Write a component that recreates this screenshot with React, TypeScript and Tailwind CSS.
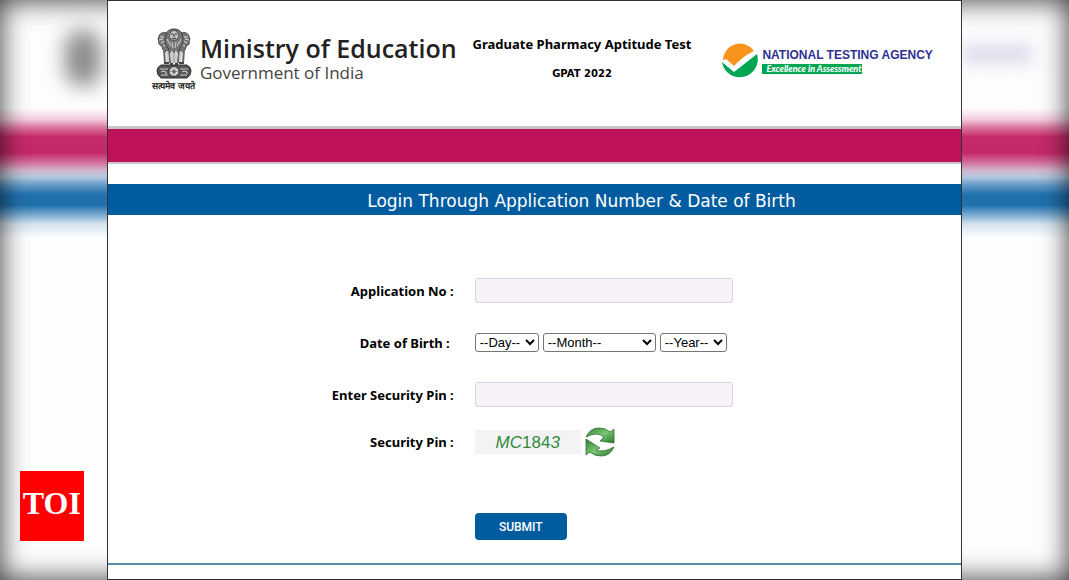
import { useState } from 'react'

const days = Array.from({ length: 31 }, (_, i) => String(i + 1))
const months = [
  'January', 'February', 'March', 'April', 'May', 'June',
  'July', 'August', 'September', 'October', 'November', 'December',
]
const years = Array.from({ length: 50 }, (_, i) => String(2005 - i))

function Emblem() {
  return (
    <svg viewBox="0 0 36 52" className="h-[52px] w-9" aria-hidden="true">
      {/* side lions */}
      <path d="M3 9c0-4 4-5 8-4l2 3v14l-4 2c-2-2-3-4-3-6-3-1-4-3-3-5-1-1-1-3 0-4z" fill="#777" stroke="#3c3c3c" />
      <path d="M33 9c0-4-4-5-8-4l-2 3v14l4 2c2-2 3-4 3-6 3-1 4-3 3-5 1-1 1-3 0-4z" fill="#777" stroke="#3c3c3c" />
      <path d="M4 9h4M3 12l4-1M5 15l4-2M7 18l4-2M32 9h-4M33 12l-4-1M31 15l-4-2M29 18l-4-2" stroke="#ddd" fill="none" />
      {/* front lion */}
      <path d="M10 8c0-5 4-7 8-7s8 2 8 7c2 4 1 9-2 12l-2 4h-8l-2-4c-3-3-4-8-2-12z" fill="#777" stroke="#3a3a3a" />
      <ellipse cx="18" cy="7.500" rx="4.500" ry="5" fill="#c5c5c5" stroke="#555" />
      <path d="M15 6h2M19 6h2M18 6v3M16 10q2 2 4 0" stroke="#222" fill="none" />
      <path d="M11 11l2 4M13 14l2 4M16 14l1 6M20 14l-1 6M23 14l-2 4M25 11l-2 4" stroke="#ccc" fill="none" />
      {/* legs */}
      <path d="M8 22l1 13M13 22l1 13M23 22l-1 13M28 22l-1 13" stroke="#666" strokeWidth="2" />
      <path d="M11 23l1 12M16 23v12M20 23v12M25 23l-1 12" stroke="#ccc" strokeWidth="2" />
      <path d="M18 22v13" stroke="#666" />
      <path d="M8 35h5M14 36h3M19 36h3M23 35h5" stroke="#444" strokeWidth="2" />
      {/* abacus with the wheel */}
      <path d="M5 37h26q4 2 4 6t-4 7H5q-4-3-4-7t4-6z" fill="#555" stroke="#333" />
      <path d="M4 41h8M24 41h8M5 47h7M24 47h7" stroke="#ccc" />
      <path d="M5 44l2-1 3 1v2M26 44l2-1 3 1v2" stroke="#ddd" fill="none" />
      <circle cx="18" cy="43.500" r="5" fill="#ddd" stroke="#333" />
      <circle cx="18" cy="43.500" r="1.500" fill="#444" />
      <path d="M18 39v9M13.500 43.500h9M15 40.500l6 6M21 40.500l-6 6" stroke="#666" strokeWidth=".6" />
    </svg>
  )
}

function AgencyMark() {
  return (
    <svg viewBox="0 0 36 36" className="size-9 shrink-0" aria-hidden="true">
      <path d="M1 17A17 17 0 0 1 32 8L12 24 5 17z" fill="#f7941d" />
      <path d="M0 19l12 10L35 11A18 18 0 1 1 0 19z" fill="#00a651" />
      <path d="M0 18l4-2 8 7Q21 13 32 8l3 2Q22 17 12 28z" fill="#fff" />
    </svg>
  )
}

function RefreshIcon() {
  return (
    <svg viewBox="0 0 30 30" className="size-[30px]" aria-hidden="true">
      <defs>
        <linearGradient id="leaf" x1="0" y1="0" x2="1" y2="1">
          <stop offset="0" stopColor="#2f7d32" />
          <stop offset=".5" stopColor="#7cc576" />
          <stop offset="1" stopColor="#2a7a2c" />
        </linearGradient>
      </defs>
      <path d="M1 10Q5 1 14 1q7 0 11 4l4-3v14l-14-2 4-4Q12 4 1 10z" fill="url(#leaf)" stroke="#2b6e2d" strokeWidth=".8" />
      <path d="M29 20Q25 29 16 29q-7 0-11-4l-4 3V12l14 9-4 2Q18 26 29 20z" fill="url(#leaf)" stroke="#2b6e2d" strokeWidth=".8" />
    </svg>
  )
}

const labelClass = 'pr-[21px] text-right font-["Noto_Sans",sans-serif] text-[13px] leading-4 font-bold text-black'
const inputClass = 'h-[25px] w-[258px] rounded-[3px] border border-[#d8d2dc] bg-[#f7f2f9] px-2 text-[13px]'
const selectClass =
  'h-[19px] rounded-[3px] border border-[#767676] bg-white font-["Liberation_Sans",Arial,sans-serif] text-[13px] leading-4 text-black'

export default function App() {
  const [pin, setPin] = useState('')

  return (
    <div className="flex min-h-screen bg-[linear-gradient(#fdfdfe_0px,#fdfdfe_108px,#f3cfdf_119px,#dc7ba4_127px,#c52a6b_137px,#c3286a_153px,#d273a0_163px,#d3b3cc_170px,#b3c8de_177px,#5c96c4_186px,#2070ad_195px,#2070ad_205px,#71a5cd_214px,#d3e3ef_224px,#fdfdfe_238px)] font-['DejaVu_Sans',Verdana,sans-serif] shadow-[inset_0_0_28px_rgba(0,0,0,0.8)]">
      <aside className="flex w-[10%] shrink-0 flex-col items-end justify-between overflow-hidden">
        <div className="mt-[30px] mr-1.5 h-14 w-9 rounded-2xl bg-[#8c8c8c] blur-[10px]" />
        <div className="mr-[23px] mb-[39px] flex h-[70px] w-16 items-center justify-center bg-[#fe0000] pb-1.5 font-['Liberation_Serif','Times_New_Roman',serif] text-[32px] font-bold text-white">
          TOI
        </div>
      </aside>

      <main className="flex flex-1 flex-col border border-[#333] bg-white">
        <header className="flex h-[125px] items-start pl-11">
          <div className="flex shrink-0 items-start">
            <div className="flex w-11 flex-col items-center pt-[27px]">
              <Emblem />
              <span lang="hi" className="text-[9px] leading-3 font-bold whitespace-nowrap text-[#222]">
                सत्यमेव जयते
              </span>
            </div>
            <div className="pt-[31px] pl-1 font-['Open_Sans',sans-serif] whitespace-nowrap">
              <div className="text-[25px] leading-8 font-semibold text-[#222]">Ministry of Education</div>
              <div className="text-[17px] leading-[18px] text-[#444]">Government of India</div>
            </div>
          </div>
          <div className="ml-4 shrink-0 pt-[35px] text-center font-bold whitespace-nowrap text-black">
            <h1 className="font-['Noto_Sans',sans-serif] text-[13px] leading-4">Graduate Pharmacy Aptitude Test</h1>
            <p className="mt-3.5 text-[10px] leading-4">GPAT 2022</p>
          </div>
          <div className="mt-[42px] ml-[31px] flex gap-1">
            <AgencyMark />
            <div className="pt-1 font-['Liberation_Sans',Arial,sans-serif] font-bold whitespace-nowrap">
              <div className="text-[12px] leading-[17px] text-[#2e3192]">NATIONAL TESTING AGENCY</div>
              <div className="w-[100px] bg-[#00a651] pl-1 font-['Lato',sans-serif] text-[9px] leading-[10px] font-black text-white italic">
                Excellence in Assessment
              </div>
            </div>
          </div>
        </header>

        <div className="h-[38px] border-t-3 border-b-2 border-[#c9c5c9] bg-[#be125a]" />
        <h2 className="mt-5 h-[31px] bg-[#005c9f] pl-[94px] text-center text-[17px] leading-[34px] text-white">
          Login Through Application Number &amp; Date of Birth
        </h2>

        <form className="flex flex-1 flex-col pt-[63px]" onSubmit={(e) => e.preventDefault()}>
          <div className="grid grid-cols-[43%_1fr] items-center">
            <label htmlFor="application" className={labelClass}>Application No :</label>
            <div>
              <input id="application" type="text" className={inputClass} />
            </div>
          </div>

          <div className="mt-[30px] grid grid-cols-[43%_1fr] items-center">
            <label htmlFor="day" className={`${labelClass} mr-1`}>Date of Birth :</label>
            <div className="flex gap-1">
              <select id="day" className={`${selectClass} w-16`}>
                <option>--Day--</option>
                {days.map((d) => <option key={d}>{d}</option>)}
              </select>
              <select aria-label="Month" className={`${selectClass} w-[113px]`}>
                <option>--Month--</option>
                {months.map((m) => <option key={m}>{m}</option>)}
              </select>
              <select aria-label="Year" className={`${selectClass} w-[67px]`}>
                <option>--Year--</option>
                {years.map((y) => <option key={y}>{y}</option>)}
              </select>
            </div>
          </div>

          <div className="mt-[30px] grid grid-cols-[43%_1fr] items-center">
            <label htmlFor="pin" className={labelClass}>Enter Security Pin :</label>
            <div>
              <input id="pin" type="text" value={pin} onChange={(e) => setPin(e.target.value)} className={inputClass} />
            </div>
          </div>

          <div className="mt-5 grid grid-cols-[43%_1fr] items-center">
            <span className={labelClass}>Security Pin :</span>
            <div className="flex items-center gap-1">
              <span className="flex h-6 w-[106px] items-center justify-center bg-[#f5f2f6] pt-0.5 font-['Liberation_Sans',Arial,sans-serif] text-[17px] text-[#2f8a3a]">
                <i>MC</i>184<i>3</i>
              </span>
              <button type="button" aria-label="Refresh security pin" onClick={() => setPin('')}>
                <RefreshIcon />
              </button>
            </div>
          </div>

          <div className="mt-14 grid grid-cols-[43%_1fr]">
            <button
              type="submit"
              className="col-start-2 h-[27px] w-[92px] rounded-[4px] bg-[#005c9f] font-['Roboto',sans-serif] text-[12px] font-medium text-white"
            >
              SUBMIT
            </button>
          </div>
        </form>
        <footer className="h-4 border-t-2 border-[#5a8ca8]" />
      </main>

      <aside className="w-[10%] shrink-0 overflow-hidden">
        <div className="mt-11 h-5 w-[70px] bg-[#dcdcec] blur-[8px]" />
      </aside>
    </div>
  )
}
